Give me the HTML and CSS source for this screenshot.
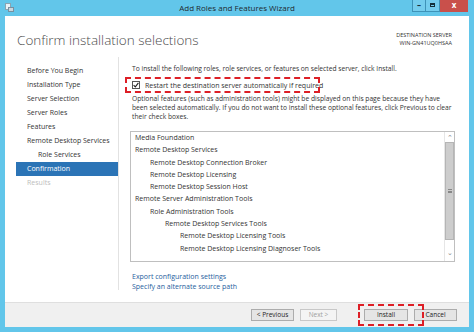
FILE: index.html
```html
<!DOCTYPE html>
<html>
<head>
<meta charset="utf-8">
<title>Add Roles and Features Wizard</title>
<link rel="stylesheet" href="styles.css">
</head>
<body>
<div class="win">
	<div class="titlebar">
		<svg class="app-ico" width="9" height="9" viewBox="0 0 9 9">
			<rect x="0.5" y="0.5" width="5" height="6" fill="#e8f2f7" stroke="#8aa4b2"/>
			<rect x="3.5" y="4.5" width="5" height="4" fill="#c9d6de" stroke="#7890a0"/>
		</svg>
		<span class="title">Add Roles and Features Wizard</span>
		<div class="ctrls">
			<span class="cbtn">&#8211;</span>
			<span class="cbtn max"></span>
			<span class="cbtn close">x</span>
		</div>
	</div>
	<div class="client">
		<div class="hdr">
			<h1 class="hd">Confirm installation selections</h1>
			<div class="dest">DESTINATION SERVER<br>WIN-GN41UQ0HSAA</div>
		</div>
		<div class="main">
			<ul class="steps">
				<li>Before You Begin</li>
				<li>Installation Type</li>
				<li>Server Selection</li>
				<li>Server Roles</li>
				<li>Features</li>
				<li>Remote Desktop Services</li>
				<li class="sub">Role Services</li>
				<li class="on">Confirmation</li>
				<li class="off">Results</li>
			</ul>
			<div class="content">
				<p class="intro">To install the following roles, role services, or features on selected server, click Install.</p>
				<div class="restart mark">
					<span class="chk">
						<svg width="6" height="6" viewBox="0 0 6 6"><path d="M0.6 3.2 L2.3 4.9 L5.4 0.8" fill="none" stroke="#222" stroke-width="1.1"/></svg>
					</span>
					Restart the destination server automatically if required
				</div>
				<p class="note">Optional features (such as administration tools) might be displayed on this page because they have been selected automatically. If you do not want to install these optional features, click Previous to clear their check boxes.</p>
				<div class="list">
					<div class="items">
						<p class="grp">Media Foundation</p>
						<p class="grp">Remote Desktop Services</p>
						<p class="l1">Remote Desktop Connection Broker</p>
						<p class="l1">Remote Desktop Licensing</p>
						<p class="l1">Remote Desktop Session Host</p>
						<p class="grp">Remote Server Administration Tools</p>
						<p class="l1">Role Administration Tools</p>
						<p class="l2">Remote Desktop Services Tools</p>
						<p class="l3">Remote Desktop Licensing Tools</p>
						<p class="l3">Remote Desktop Licensing Diagnoser Tools</p>
					</div>
					<div class="sbar">
						<span class="arr">&#8963;</span>
						<div class="thumb"><span class="grip"></span></div>
						<span class="arr dn">&#8964;</span>
					</div>
				</div>
				<div class="links">
					<a>Export configuration settings</a>
					<a>Specify an alternate source path</a>
				</div>
			</div>
		</div>
		<div class="footer">
			<span class="btn">&lt; Previous</span>
			<span class="btn dis">Next &gt;</span>
			<span class="btn install mark">Install</span>
			<span class="btn">Cancel</span>
		</div>
	</div>
</div>
</body>
</html>
```

FILE: styles.css
```css
*,*:before,*:after{
	padding: 0;
	margin: 0;
	box-sizing: border-box;
}
body{
	font-family: "Open Sans", "Noto Sans", sans-serif;
	color: #333;
	background: #62c6ea;
}
.win{
	width: 474px;
	height: 332px;
	display: flex;
	flex-direction: column;
	background: #62c6ea;
	padding: 0 5px 5px 5px;
}
.titlebar{
	height: 16px;
	display: flex;
	align-items: flex-start;
	position: relative;
}
.app-ico{
	margin-top: 3px;
}
.title{
	position: absolute;
	left: 0;
	right: 0;
	top: 2px;
	text-align: center;
	font-size: 8px;
	color: #1f2a30;
}
.ctrls{
	margin-left: auto;
	display: flex;
	margin-right: 1px;
}
.cbtn{
	width: 14px;
	height: 12px;
	border: 1px solid #3e93b8;
	border-top: 0;
	background: #74cdee;
	color: #14303c;
	font-size: 8px;
	font-weight: bold;
	line-height: 10px;
	text-align: center;
}
.cbtn.max{
	border-left: 0;
	position: relative;
}
.cbtn.max:after{
	content: "";
	position: absolute;
	left: 4px;
	top: 3px;
	width: 5px;
	height: 4px;
	border: 1px solid #14303c;
	border-top-width: 2px;
}
.cbtn.close{
	width: 28px;
	margin-left: 0;
	border: 0;
	background: #c9504b;
	color: #fff;
}
.client{
	flex: 1;
	background: #fff;
	display: flex;
	flex-direction: column;
}
.hdr{
	height: 41px;
	display: flex;
	align-items: flex-start;
	padding: 0 17px 0 12px;
}
.hd{
	font-size: 13.5px;
	line-height: 16px;
	font-weight: 300;
	color: #4b4b4b;
	margin-top: 16px;
}
.dest{
	margin-left: auto;
	margin-top: 15px;
	font-size: 5.5px;
	line-height: 8px;
	text-align: right;
	color: #333;
}
.main{
	flex: 1;
	display: flex;
}
.steps{
	list-style: none;
	width: 114px;
	padding: 7px 0 0 11px;
	margin-bottom: 12px;
	border-right: 1px solid #e2e2e2;
}
.steps li{
	height: 14px;
	line-height: 14px;
	padding-left: 11px;
	font-size: 7px;
	color: #333;
	white-space: nowrap;
}
.steps .sub{
	padding-left: 22px;
}
.steps .on{
	background: #2b74b6;
	color: #fff;
}
.steps .off{
	color: #bdbdbd;
}
.content{
	flex: 1;
	padding: 7px 14px 0 13px;
	font-size: 6.7px;
	line-height: 9px;
}
.intro{
	font-size: 6.7px;
}
.mark{
	position: relative;
}
.mark:after{
	content: "";
	position: absolute;
	border: 2px dashed #dd1f26;
}
.restart{
	display: flex;
	align-items: center;
	gap: 5px;
	height: 16px;
	margin-top: 4px;
	font-size: 7px;
}
.restart:after{
	left: -7px;
	top: 0;
	width: 195px;
	bottom: 0;
}
.chk{
	width: 8px;
	height: 8px;
	border: 1px solid #555;
	display: flex;
	align-items: center;
	justify-content: center;
}
.note{
	margin-top: 1px;
}
.list{
	margin: 10px 0 0 -2px;
	height: 131px;
	border: 1px solid #bfbfbf;
	display: flex;
	font-size: 7px;
}
.items{
	flex: 1;
	padding: 0 0 0 4px;
}
.items p{
	line-height: 12.3px;
	white-space: nowrap;
}
.items .l1{
	padding-left: 15px;
}
.items .l2{
	padding-left: 30px;
}
.items .l3{
	padding-left: 45px;
}
.sbar{
	width: 10px;
	border-left: 1px solid #e6e6e6;
	display: flex;
	flex-direction: column;
	align-items: center;
	padding-bottom: 1px;
}
.arr{
	height: 10px;
	font-size: 7px;
	line-height: 12px;
	color: #888;
}
.arr.dn{
	margin-top: auto;
	line-height: 6px;
}
.thumb{
	width: 9px;
	height: 98px;
	background: #cdcdcd;
	border: 1px solid #b5b5b5;
	display: flex;
	align-items: center;
	justify-content: center;
}
.grip{
	width: 4px;
	height: 4px;
	border-top: 1px solid #888;
	border-bottom: 1px solid #888;
	background: linear-gradient(#888, #888) center/4px 1px no-repeat;
}
.links{
	margin-top: 10px;
	display: flex;
	flex-direction: column;
	line-height: 10px;
}
.links a{
	color: #26609e;
	font-size: 7px;
}
.footer{
	height: 25px;
	background: #f0f0f0;
	border-top: 1px solid #dfdfdf;
	display: flex;
	align-items: center;
	justify-content: flex-end;
	padding: 0 12px 0 0;
	gap: 6px;
}
.btn{
	width: 43px;
	height: 12px;
	border: 1px solid #acacac;
	background: #e5e5e5;
	font-size: 6.5px;
	line-height: 10px;
	text-align: center;
	color: #222;
}
.btn.dis{
	width: 37px;
	color: #a0a0a0;
	border-color: #c8c8c8;
	background: #f4f4f4;
}
.btn.install{
	margin-left: 21px;
	width: 44px;
}
.install:after{
	left: -7px;
	right: -17px;
	top: -6px;
	bottom: -6px;
}
```
